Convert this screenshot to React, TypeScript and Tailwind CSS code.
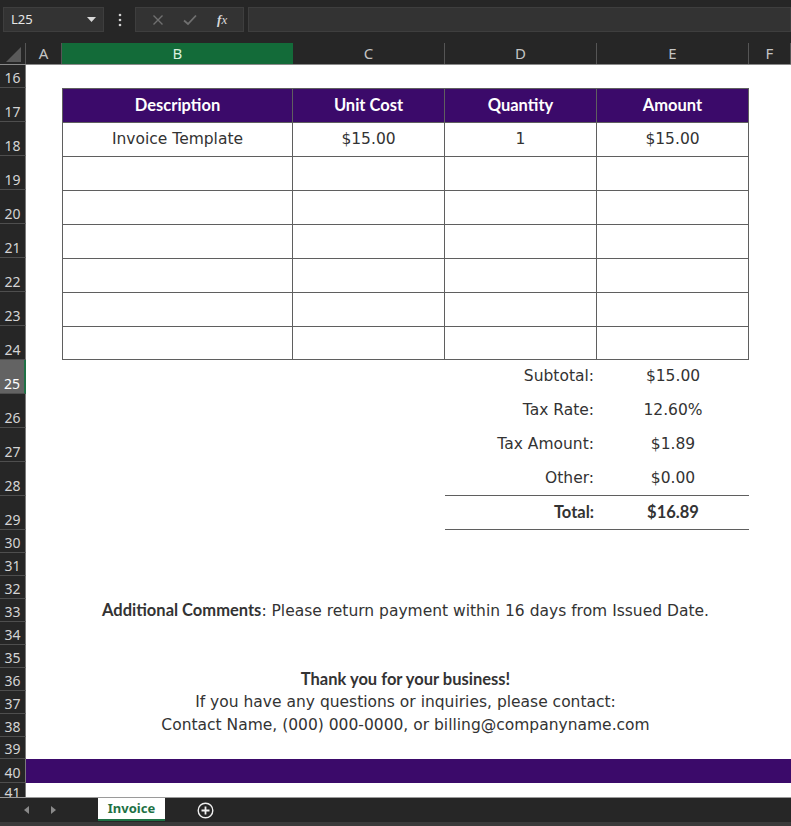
import React from "react";

const SHEET_FONT = { fontFamily: '"DejaVu Sans", "Noto Sans", sans-serif' };
const BOLD_FONT = { fontFamily: 'Lato, "Noto Sans", sans-serif' };
const UI_FONT = { fontFamily: '"Noto Sans", "Open Sans", sans-serif' };

const COLS = [
  { key: "A", w: "w-[36px]" },
  { key: "B", w: "w-[231px]" },
  { key: "C", w: "w-[152px]" },
  { key: "D", w: "w-[152px]" },
  { key: "E", w: "w-[152px]" },
  { key: "F", w: "w-[42px]" },
];

function RowHead({ n, h, active, clip }: { n: number; h: string; active?: boolean; clip?: boolean }) {
  return (
    <div
      className={`${h} w-[26px] shrink-0 flex justify-center overflow-hidden text-[14px] leading-none ${
        clip ? "items-start pt-[3px]" : "items-end pb-[2px] border-b border-[#4e4e4e]"
      } ${active ? "bg-[#636363] text-white border-r-2 border-r-[#1e7145]" : "bg-[#262626] text-[#d4d4d4] border-r border-r-[#7a7a7a]"}`}
      style={UI_FONT}
    >
      {n}
    </div>
  );
}

function TopBar() {
  return (
    <div className="h-[43px] shrink-0 bg-[#262626] flex items-start pt-[7px] pl-[3px]" style={UI_FONT}>
      <div className="w-[101px] h-[25px] bg-[#333333] border border-[#3e3e3e] flex items-center justify-between px-[7px] text-[13px] text-[#e6e6e6]">
        <span>L25</span>
        <svg width="9" height="6" viewBox="0 0 9 6">
          <path d="M0 0 L9 0 L4.5 5 Z" fill="#d8d8d8" />
        </svg>
      </div>
      <div className="w-[31px] h-[25px] flex items-center justify-center">
        <svg width="4" height="14" viewBox="0 0 4 14">
          <circle cx="2" cy="2" r="1.3" fill="#d0d0d0" />
          <circle cx="2" cy="7" r="1.3" fill="#d0d0d0" />
          <circle cx="2" cy="12" r="1.3" fill="#d0d0d0" />
        </svg>
      </div>
      <div className="w-[109px] h-[25px] bg-[#333333] border border-[#3e3e3e] flex items-center justify-around px-[6px]">
        <svg width="12" height="12" viewBox="0 0 12 12">
          <path d="M1.5 1.5 L10.5 10.5 M10.5 1.5 L1.5 10.5" stroke="#707070" strokeWidth="1.4" />
        </svg>
        <svg width="14" height="12" viewBox="0 0 14 12">
          <path d="M1 6.5 L5 10 L13 1.5" stroke="#707070" strokeWidth="1.8" fill="none" />
        </svg>
        <span className="text-[13px] italic text-[#d8d8d8]" style={{ fontFamily: '"Liberation Serif", serif' }}>
          <b>f</b>x
        </span>
      </div>
      <div className="ml-[4px] flex-1 h-[25px] bg-[#333333] border border-[#3e3e3e]" />
    </div>
  );
}

function ColHeads() {
  return (
    <div className="h-[22px] shrink-0 flex bg-[#262626] border-b border-[#8a8a8a]" style={UI_FONT}>
      <div className="w-[26px] shrink-0 flex items-end justify-end pr-[4px] pb-[2px] border-r border-[#555]">
        <svg width="15" height="15" viewBox="0 0 15 15">
          <path d="M15 0 L15 15 L0 15 Z" fill="#5a5a5a" />
        </svg>
      </div>
      {COLS.map((c) => (
        <div
          key={c.key}
          className={`${c.w} shrink-0 flex items-center justify-center text-[15px] ${
            c.key === "B" ? "bg-[#136b39] text-[#d9f0de]" : "text-[#c4c4c4] border-r border-[#555]"
          }`}
        >
          {c.key}
        </div>
      ))}
    </div>
  );
}

const tableRows = [
  ["Invoice Template", "$15.00", "1", "$15.00"],
  ["", "", "", ""],
  ["", "", "", ""],
  ["", "", "", ""],
  ["", "", "", ""],
  ["", "", "", ""],
  ["", "", "", ""],
];

const totals = [
  { label: "Subtotal:", value: "$15.00" },
  { label: "Tax Rate:", value: "12.60%" },
  { label: "Tax Amount:", value: "$1.89" },
  { label: "Other:", value: "$0.00" },
];

export default function App() {
  return (
    <div className="w-[791px] h-[826px] overflow-hidden bg-[#262626] flex flex-col">
      <TopBar />
      <ColHeads />
      <div className="flex-1 flex flex-col overflow-hidden bg-white text-[#333333] text-[15.5px]" style={SHEET_FONT}>
        {/* row 16 */}
        <div className="flex">
          <RowHead n={16} h="h-[23px]" />
          <div className="flex-1" />
        </div>
        {/* row 17 header */}
        <div className="flex">
          <RowHead n={17} h="h-[34px]" />
          <div className="w-[36px]" />
          {["Description", "Unit Cost", "Quantity", "Amount"].map((t, i) => (
            <div
              key={t}
              className={`${i === 0 ? "w-[231px] border-l" : "w-[152px]"} h-[34px] bg-[#3b0a6a] border-r border-t border-[#5f5f5f] flex items-center justify-center text-white font-bold text-[16.5px]`}
              style={BOLD_FONT}
            >
              {t}
            </div>
          ))}
        </div>
        {tableRows.map((r, ri) => (
          <div key={ri} className="flex">
            <RowHead n={18 + ri} h="h-[34px]" />
            <div className="w-[36px]" />
            {r.map((t, i) => (
              <div
                key={i}
                className={`${i === 0 ? "w-[231px] border-l" : "w-[152px]"} h-[34px] border-r border-t ${
                  ri === tableRows.length - 1 ? "border-b" : ""
                } border-[#5f5f5f] flex items-center justify-center`}
              >
                {t}
              </div>
            ))}
          </div>
        ))}
        {totals.map((t, i) => (
          <div key={t.label} className="flex">
            <RowHead n={25 + i} h="h-[34px]" active={i === 0} />
            <div className="w-[419px]" />
            <div className={`w-[152px] h-[34px] flex items-center justify-end pr-[3px] ${i === 3 ? "border-b border-[#5f5f5f]" : ""}`}>
              {t.label}
            </div>
            <div className={`w-[152px] h-[34px] flex items-center justify-center ${i === 3 ? "border-b border-[#5f5f5f]" : ""}`}>
              {t.value}
            </div>
          </div>
        ))}
        <div className="flex">
          <RowHead n={29} h="h-[34px]" />
          <div className="w-[419px]" />
          <div
            className="w-[152px] h-[34px] border-b border-[#5f5f5f] flex items-center justify-end pr-[3px] text-[16.5px] font-bold"
            style={BOLD_FONT}
          >
            Total:
          </div>
          <div
            className="w-[152px] h-[34px] border-b border-[#5f5f5f] flex items-center justify-center text-[16.5px] font-bold"
            style={BOLD_FONT}
          >
            $16.89
          </div>
        </div>
        {[30, 31, 32, 33, 34, 35, 36, 37, 38, 39].map((n) => (
          <div key={n} className="flex">
            <RowHead n={n} h={n === 39 ? "h-[22px]" : "h-[23px]"} />
            <div className="w-[36px]" />
            <div className="w-[687px] flex items-center justify-center leading-none">
              {n === 33 && (
                <span>
                  <b className="text-[16.5px]" style={BOLD_FONT}>
                    Additional Comments
                  </b>
                  : Please return payment within 16 days from Issued Date.
                </span>
              )}
              {n === 36 && (
                <b className="text-[16.5px]" style={BOLD_FONT}>
                  Thank you for your business!
                </b>
              )}
              {n === 37 && "If you have any questions or inquiries, please contact:"}
              {n === 38 && "Contact Name, (000) 000-0000, or billing@companyname.com"}
            </div>
          </div>
        ))}
        <div className="flex">
          <RowHead n={40} h="h-[24px]" />
          <div className="flex-1 bg-[#3b0a6a]" />
        </div>
        <div className="flex">
          <RowHead n={41} h="h-[14px]" clip />
          <div className="flex-1" />
        </div>
      </div>
      {/* sheet tabs */}
      <div className="h-[29px] shrink-0 bg-[#262626] border-t border-[#9a9a9a] flex items-start relative" style={UI_FONT}>
        <div className="w-[98px] h-[24px] flex items-center gap-[22px] pl-[24px]">
          <svg width="5" height="8" viewBox="0 0 5 8">
            <path d="M5 0 L5 8 L0 4 Z" fill="#8a8a8a" />
          </svg>
          <svg width="5" height="8" viewBox="0 0 5 8">
            <path d="M0 0 L0 8 L5 4 Z" fill="#8a8a8a" />
          </svg>
        </div>
        <div className="w-[67px] h-[23px] bg-white border-b-2 border-[#1e7145] flex items-center justify-center text-[13px] font-bold text-[#1e7145]">
          Invoice
        </div>
        <div className="ml-[32px] h-[24px] flex items-center">
          <svg width="17" height="17" viewBox="0 0 17 17">
            <circle cx="8.5" cy="8.5" r="7.3" stroke="#f0f0f0" strokeWidth="1.4" fill="none" />
            <path d="M8.5 4.5 V12.5 M4.5 8.5 H12.5" stroke="#f0f0f0" strokeWidth="1.8" />
          </svg>
        </div>
        <div className="absolute left-0 right-0 bottom-0 h-[4px] bg-[#3a3a3a]" />
      </div>
    </div>
  );
}
